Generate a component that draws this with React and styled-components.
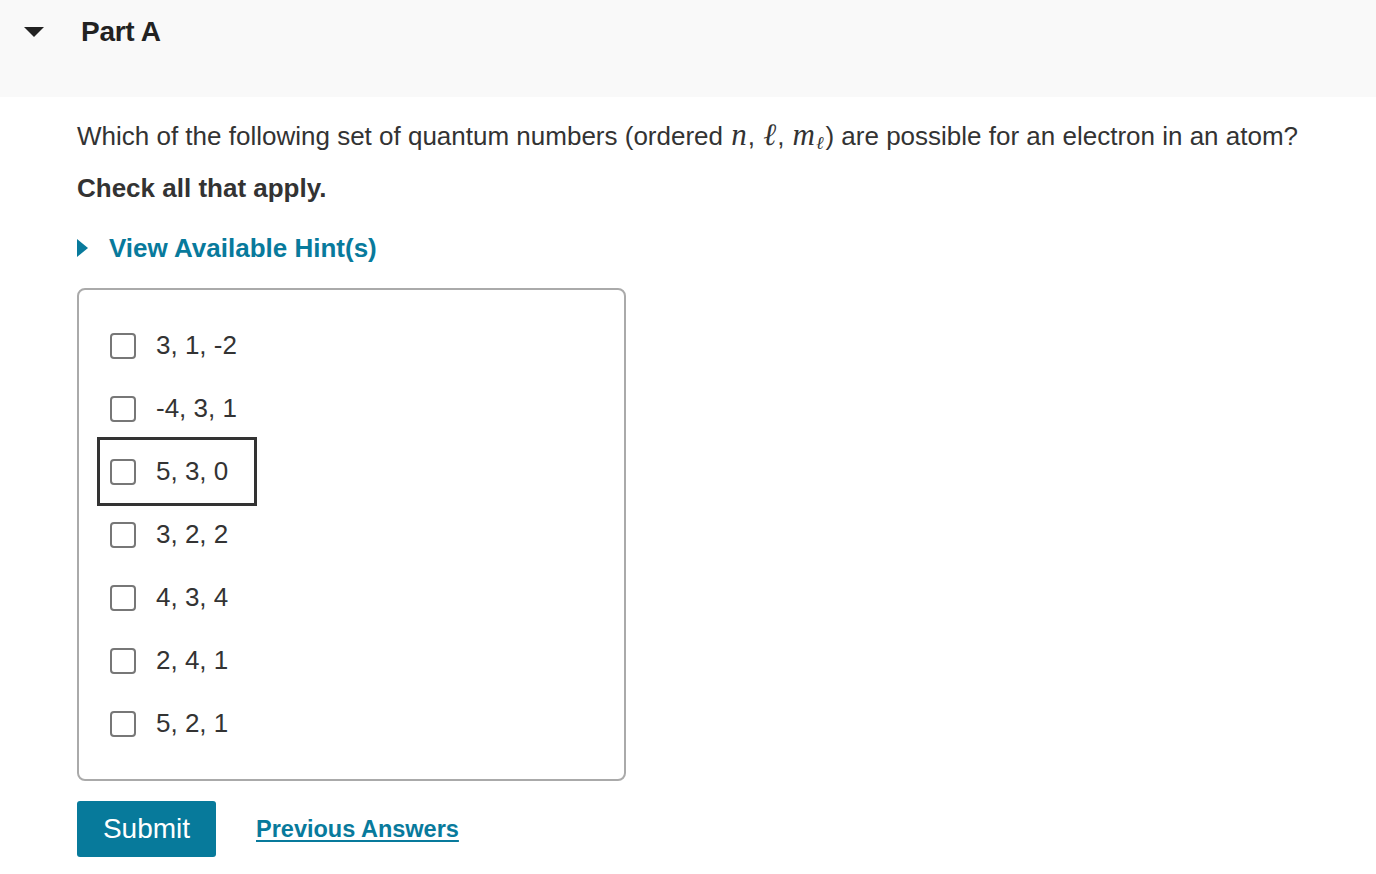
import React from "react";
import styled, { createGlobalStyle } from "styled-components";

const GlobalStyle = createGlobalStyle`
  html, body {
    margin: 0;
    padding: 0;
    background: #fff;
    font-family: "Liberation Sans", Arial, sans-serif;
    color: #333;
  }
`;

const options = ["3, 1, -2", "-4, 3, 1", "5, 3, 0", "3, 2, 2", "4, 3, 4", "2, 4, 1", "5, 2, 1"];

export default function App() {
  return (
    <>
      <GlobalStyle />
      <Header>
        <Caret />
        <PartTitle>Part A</PartTitle>
      </Header>
      <Body>
        <Question>
          Which of the following set of quantum numbers (ordered <MathVar>n</MathVar>,{" "}
          <MathVar>ℓ</MathVar>, <MathVar>m</MathVar>
          <Sub>ℓ</Sub>) are possible for an electron in an atom?
        </Question>
        <Instruction>Check all that apply.</Instruction>
        <HintToggle>
          <HintCaret />
          View Available Hint(s)
        </HintToggle>
        <ChoiceBox>
          {options.map((opt, i) => (
            <Choice key={opt} $focused={i === 2}>
              <Check />
              <ChoiceLabel>{opt}</ChoiceLabel>
            </Choice>
          ))}
        </ChoiceBox>
        <Actions>
          <SubmitButton>Submit</SubmitButton>
          <PrevLink href="#">Previous Answers</PrevLink>
        </Actions>
      </Body>
    </>
  );
}

const Header = styled.div`
  height: 97px;
  background: #f9f9f9;
  display: flex;
  align-items: flex-start;
  padding-top: 15px;
  box-sizing: border-box;
`;

const Caret = styled.span`
  width: 0;
  height: 0;
  margin: 12px 0 0 24px;
  border-left: 10px solid transparent;
  border-right: 10px solid transparent;
  border-top: 10px solid #222;
`;

const PartTitle = styled.h2`
  margin: 0 0 0 37px;
  font-size: 28px;
  font-weight: bold;
  color: #222;
  line-height: 34px;
  letter-spacing: -0.3px;
`;

const Body = styled.div`
  padding: 22px 0 0 77px;
`;

const Question = styled.p`
  margin: 0;
  font-size: 26px;
  line-height: 32px;
  color: #333;
`;

const MathVar = styled.span`
  font-family: "Liberation Serif", "DejaVu Serif", serif;
  font-style: italic;
  font-size: 31px;
  padding: 0 1px;
`;

const Sub = styled.span`
  font-family: "DejaVu Serif", "Liberation Serif", serif;
  font-style: italic;
  font-size: 18px;
  vertical-align: -4px;
  padding-right: 2px;
`;

const Instruction = styled.p`
  margin: 13px 0 0;
  font-size: 26px;
  font-weight: bold;
  line-height: 32px;
  color: #333;
`;

const HintToggle = styled.div`
  margin-top: 28px;
  display: flex;
  align-items: center;
  font-size: 26px;
  font-weight: bold;
  color: #087a9c;
  line-height: 32px;
`;

const HintCaret = styled.span`
  width: 0;
  height: 0;
  margin-right: 21px;
  border-top: 9px solid transparent;
  border-bottom: 9px solid transparent;
  border-left: 11px solid #087a9c;
`;

const ChoiceBox = styled.div`
  margin-top: 24px;
  width: 549px;
  box-sizing: border-box;
  border: 2px solid #aaa;
  border-radius: 8px;
  padding: 24px 0 24px 21px;
  display: flex;
  flex-direction: column;
`;

const Choice = styled.label`
  display: flex;
  align-items: center;
  align-self: flex-start;
  height: 63px;
  padding: 0 26px 0 10px;
  box-sizing: border-box;
  outline: ${(p) => (p.$focused ? "3px solid #333" : "none")};
`;

const Check = styled.span`
  width: 22px;
  height: 22px;
  border: 2px solid #777;
  border-radius: 4px;
  box-sizing: content-box;
  margin-right: 20px;
`;

const ChoiceLabel = styled.span`
  font-size: 26px;
  color: #333;
`;

const Actions = styled.div`
  margin-top: 20px;
  display: flex;
  align-items: center;
  gap: 40px;
`;

const SubmitButton = styled.button`
  width: 139px;
  height: 56px;
  background: #077a9b;
  color: #fff;
  border: none;
  border-radius: 3px;
  font-family: "Liberation Sans", Arial, sans-serif;
  font-size: 28px;
`;

const PrevLink = styled.a`
  color: #087a9c;
  font-size: 23.5px;
  font-weight: bold;
  text-decoration: underline;
  text-underline-offset: 3px;
`;
